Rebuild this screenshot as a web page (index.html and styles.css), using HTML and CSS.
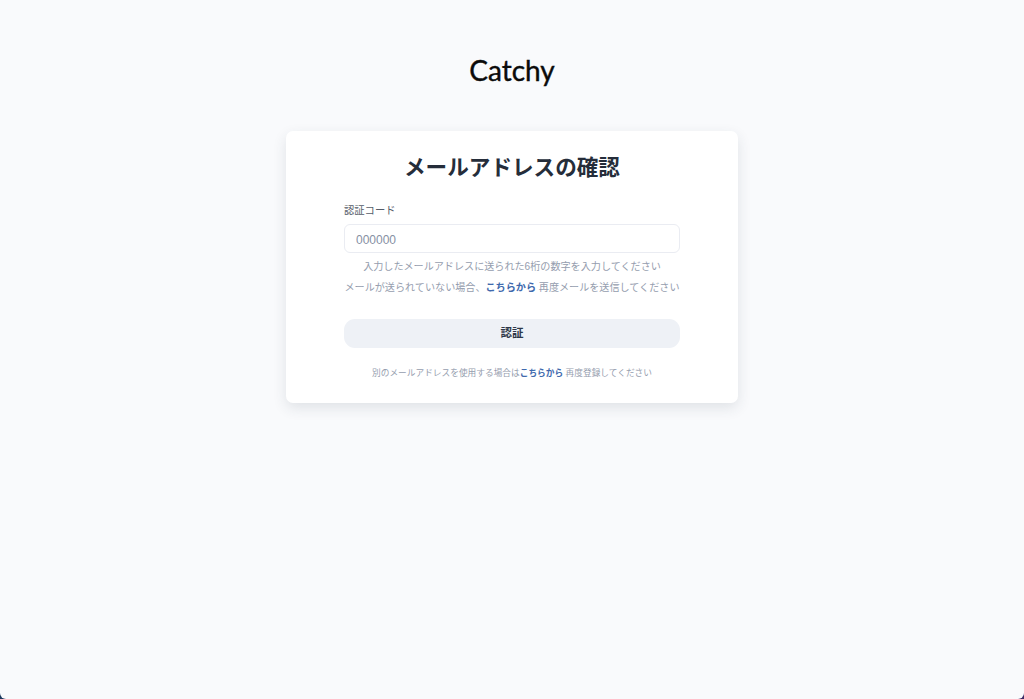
FILE: index.html
```html
<!DOCTYPE html>
<html lang="ja">
<head>
    <meta charset="UTF-8">
    <meta name="viewport" content="width=device-width, initial-scale=1.0">
    <title>メールアドレスの確認 | Catchy</title>
    <link rel="stylesheet" href="styles.css">
</head>
<body>
    <div class="page">
        <div class="logo">Catchy</div>
        <main class="card">
            <h1 class="card-title">メールアドレスの確認</h1>
            <form class="form">
                <label class="field-label" for="code">認証コード</label>
                <input class="field-input" id="code" type="text" placeholder="000000">
                <div class="hints">
                    <p class="hint">入力したメールアドレスに送られた6桁の数字を入力してください</p>
                    <p class="hint">メールが送られていない場合、<a class="link" href="#">こちらから</a> 再度メールを送信してください</p>
                </div>
                <button class="submit-btn" type="button">認証</button>
            </form>
            <p class="note">別のメールアドレスを使用する場合は<a class="link" href="#">こちらから</a> 再度登録してください</p>
        </main>
    </div>
</body>
</html>
```

FILE: styles.css
```css
*, *::before, *::after {
    margin: 0;
    padding: 0;
    box-sizing: border-box;
}

html {
    height: 100%;
    background: linear-gradient(90deg, #1d3a5f, #3a2a66);
}

body {
    height: 100%;
    font-family: "Liberation Sans", "Noto Sans CJK JP", sans-serif;
    color: #2d3748;
}

.page {
    height: 100%;
    display: flex;
    flex-direction: column;
    align-items: center;
    background-color: #f9fafc;
    border-radius: 0 0 6px 6px;
    padding-top: 48px;
}

.logo {
    font-family: "Lato", sans-serif;
    font-size: 28px;
    line-height: 44px;
    font-weight: 400;
    color: #0b0b0b;
    -webkit-text-stroke: 0.4px #0b0b0b;
}

.card {
    width: 452px;
    margin-top: 39px;
    padding: 23px 58px 22px;
    background-color: #fff;
    border-radius: 7px;
    box-shadow: 0 5px 14px rgba(45, 55, 72, 0.12);
}

.card-title {
    font-size: 21.6px;
    line-height: 28px;
    font-weight: 700;
    text-align: center;
    color: #252d3a;
}

.form {
    display: flex;
    flex-direction: column;
    margin-top: 21px;
}

.field-label {
    font-size: 10.3px;
    line-height: 16px;
    font-weight: 400;
    color: #555c68;
}

.field-input {
    height: 29px;
    margin-top: 5px;
    padding: 2px 11px 0;
    font-family: inherit;
    font-size: 12px;
    border: 1px solid #eaecf2;
    border-radius: 6px;
    outline: none;
    color: #2d3748;
}

.field-input::placeholder {
    color: #8690a3;
    opacity: 1;
}

.hints {
    display: flex;
    flex-direction: column;
    gap: 5px;
    margin-top: 6px;
}

.hint {
    font-size: 10.1px;
    line-height: 16px;
    text-align: center;
    white-space: nowrap;
    color: #959dae;
}

.link {
    font-weight: 700;
    color: #4069ad;
    text-decoration: none;
}

.submit-btn {
    height: 29px;
    margin-top: 23px;
    padding-bottom: 3px;
    font-family: inherit;
    font-size: 11.5px;
    font-weight: 700;
    color: #2d3748;
    background-color: #eef1f6;
    border: none;
    border-radius: 11px;
    cursor: pointer;
}

.note {
    margin-top: 17px;
    font-size: 8.7px;
    line-height: 16px;
    text-align: center;
    white-space: nowrap;
    color: #959dae;
}
```
